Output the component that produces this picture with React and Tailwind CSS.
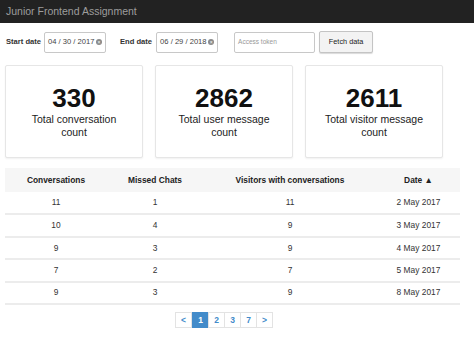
import React from "react";

const rows = [
  { conv: 11, missed: 1, visitors: 11, date: "2 May 2017" },
  { conv: 10, missed: 4, visitors: 9, date: "3 May 2017" },
  { conv: 9, missed: 3, visitors: 9, date: "4 May 2017" },
  { conv: 7, missed: 2, visitors: 7, date: "5 May 2017" },
  { conv: 9, missed: 3, visitors: 9, date: "8 May 2017" },
];

const cards = [
  { value: 330, label: "Total conversation count" },
  { value: 2862, label: "Total user message count" },
  { value: 2611, label: "Total visitor message count" },
];

const DateBox = ({ value }) => (
  <div className="flex h-[21px] w-[62px] items-center justify-between rounded-[2px] border border-[#c8c8c8] bg-white pl-[3px] pr-[3px]">
    <span className="text-[7.6px] text-[#444]">{value}</span>
    <span className="flex h-[6px] w-[6px] items-center justify-center rounded-full bg-[#8a8a8a] text-[5px] leading-none text-white">
      ×
    </span>
  </div>
);

const App = () => {
  return (
    <div className="h-[341px] w-[474px] bg-white font-['Liberation_Sans',Arial,sans-serif] text-[#333]">
      <div className="flex h-[23px] items-center bg-[#222] px-[6px]">
        <span className="text-[10.5px] text-[#9d9d9d]">Junior Frontend Assignment</span>
      </div>

      <div className="mt-[8px] flex items-center pl-[6px]">
        <span className="mr-[3px] text-[7.6px] font-bold text-[#333]">Start date</span>
        <DateBox value="04 / 30 / 2017" />
        <span className="ml-[14px] mr-[4px] text-[7.6px] font-bold text-[#333]">End date</span>
        <DateBox value="06 / 29 / 2018" />
        <div className="ml-[16px] flex h-[21px] w-[81px] items-center rounded-[2px] border border-[#c8c8c8] px-[3px]">
          <span className="text-[6.5px] text-[#999]">Access token</span>
        </div>
        <button className="ml-[4px] flex h-[22px] w-[54px] items-center justify-center rounded-[2px] border border-[#c4c4c4] bg-[#f3f3f3] text-[7.3px] text-[#222] shadow-[0_1px_1px_rgba(0,0,0,0.15)]">
          Fetch data
        </button>
      </div>

      <div className="mt-[12px] flex gap-[12px] pl-[5px]">
        {cards.map((c) => (
          <div
            key={c.value}
            className="flex h-[93px] w-[138px] flex-col items-center justify-center rounded-[2px] border border-[#e6e6e6] bg-white shadow-[0_1px_2px_rgba(0,0,0,0.06)]"
          >
            <div className="text-[26px] font-bold leading-[29px] text-[#111]">{c.value}</div>
            <div className="w-[110px] text-center text-[10.5px] leading-[13px] text-[#222]">{c.label}</div>
          </div>
        ))}
      </div>

      <table className="ml-[5px] mt-[10px] w-[455px] table-fixed border-collapse text-[8.4px] text-[#333]">
        <colgroup>
          <col className="w-[102px]" />
          <col className="w-[96px]" />
          <col className="w-[174px]" />
          <col className="w-[83px]" />
        </colgroup>
        <thead>
          <tr className="h-[24px] bg-[#f6f6f6] font-bold text-[#222]">
            <th className="font-bold">Conversations</th>
            <th className="font-bold">Missed Chats</th>
            <th className="font-bold">Visitors with conversations</th>
            <th className="font-bold">Date ▲</th>
          </tr>
        </thead>
        <tbody>
          {rows.map((r) => (
            <tr key={r.date} className="h-[22.4px] border-b-2 border-[#ececec] text-center">
              <td>{r.conv}</td>
              <td>{r.missed}</td>
              <td>{r.visitors}</td>
              <td>{r.date}</td>
            </tr>
          ))}
        </tbody>
      </table>

      <div className="ml-[176px] mt-[7px] flex text-[8.5px]">
        {["<", "1", "2", "3", "7", ">"].map((p, i) => (
          <div
            key={i}
            className={
              p === "1"
                ? "flex h-[16px] w-[17px] items-center justify-center border border-[#428bca] bg-[#428bca] font-bold text-white"
                : "-ml-px flex h-[16px] w-[17px] items-center justify-center border border-[#e3e3e3] bg-white font-bold text-[#428bca]"
            }
          >
            {p}
          </div>
        ))}
      </div>
    </div>
  );
};

export default App;
